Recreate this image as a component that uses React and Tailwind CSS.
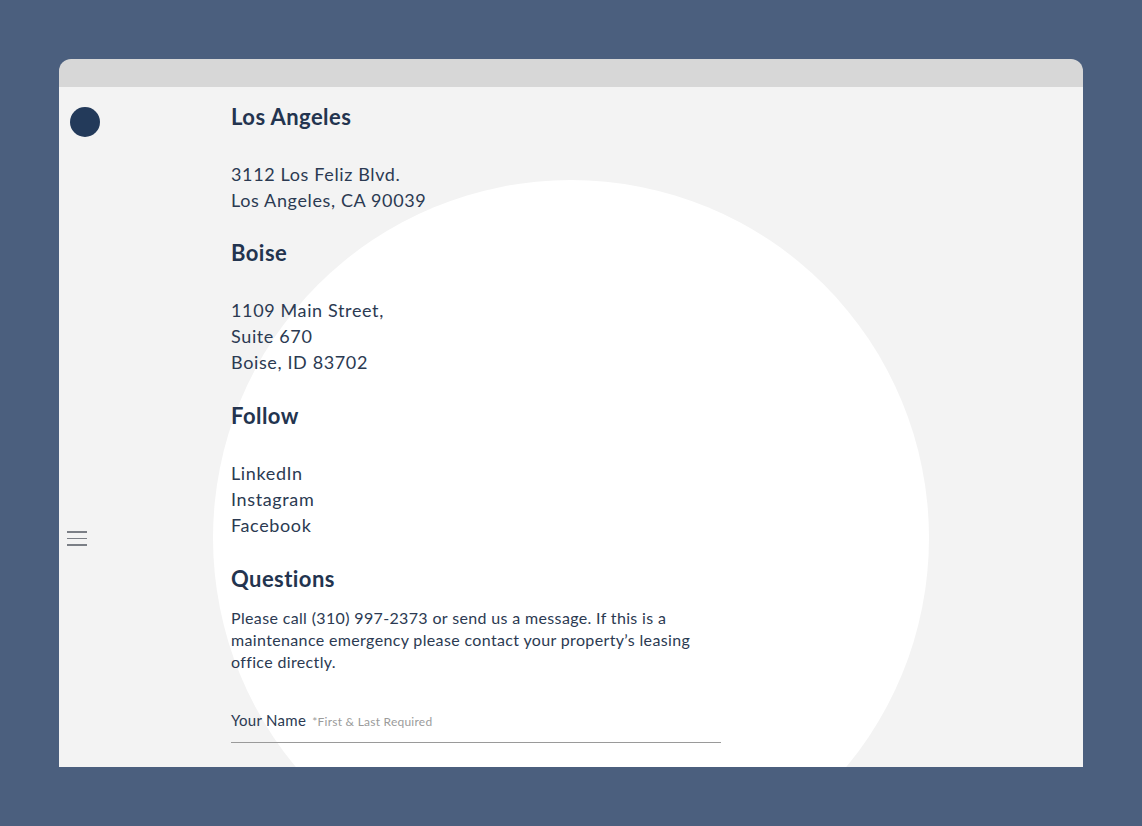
import React from 'react';

const font = { fontFamily: 'Lato, "Noto Sans", sans-serif' };

function Section({ title, lines, className = '' }) {
  return (
    <div className={className}>
      <h2 className="text-[22px] leading-[30px] font-bold text-[#23344f] tracking-[0.02em]">{title}</h2>
      <div className="mt-[29px] text-[18px] leading-[26px] text-[#2b3a52] tracking-[0.035em]">
        {lines.map(l => (
          <div key={l}>{l}</div>
        ))}
      </div>
    </div>
  );
}

export default function App() {
  return (
    <div className="min-h-[826px] bg-[#4b5f7e] pt-[59px] px-[59px]" style={font}>
      <div className="w-[1024px]">
        {/* title bar */}
        <div className="h-[28px] bg-[#d7d7d7] rounded-t-[12px]" />

        {/* window content */}
        <div className="relative h-[680px] bg-[#f3f3f3] overflow-hidden flex">
          {/* big white circle */}
          <div className="absolute left-[154px] top-[93px] w-[716px] h-[716px] rounded-full bg-white" />

          {/* left rail */}
          <div className="relative w-[172px] shrink-0 flex flex-col pl-[11px] pt-[20px]">
            <div className="w-[30px] h-[30px] rounded-full bg-[#233a5a]" />
            <button className="mt-[394px] -ml-[3px] w-[20px] flex flex-col gap-[5px]">
              <span className="block h-[1.5px] bg-[#7b7f86]" />
              <span className="block h-[1.5px] bg-[#7b7f86]" />
              <span className="block h-[1.5px] bg-[#7b7f86]" />
            </button>
          </div>

          {/* text column */}
          <div className="relative pt-[15px] w-[490px]">
            <Section title="Los Angeles" lines={['3112 Los Feliz Blvd.', 'Los Angeles, CA 90039']} />
            <Section className="mt-[25px]" title="Boise" lines={['1109 Main Street,', 'Suite 670', 'Boise, ID 83702']} />
            <Section className="mt-[26px]" title="Follow" lines={['LinkedIn', 'Instagram', 'Facebook']} />

            <div className="mt-[26px]">
              <h2 className="text-[22px] leading-[30px] font-bold text-[#23344f] tracking-[0.02em]">Questions</h2>
              <p className="mt-[13px] text-[16px] leading-[22px] text-[#2b3a52] tracking-[0.022em]">
                Please call (310) 997-2373 or send us a message. If this is a maintenance emergency please contact your property’s leasing office directly.
              </p>
            </div>

            <label className="mt-[35px] block border-b border-[#9a9a9a] pb-[10px]">
              <span className="text-[15px] leading-[20px] text-[#2b3a52] tracking-[0.02em]">Your Name</span>
              <span className="ml-[6px] text-[12px] text-[#9b9b9b] tracking-[0.02em]">*First &amp; Last Required</span>
            </label>
          </div>
        </div>
      </div>
    </div>
  );
}
